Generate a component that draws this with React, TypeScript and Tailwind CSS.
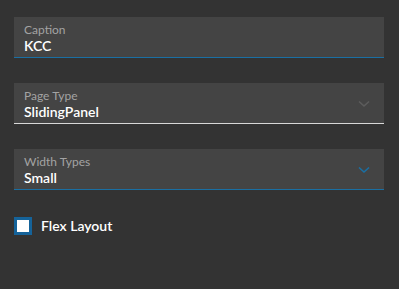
import React from "react";

function Chevron({ color }: { color: string }) {
  return (
    <svg width="12" height="8" viewBox="0 0 12 8" fill="none">
      <path d="M1 1.5 L6 6 L11 1.5" stroke={color} strokeWidth="1.6" />
    </svg>
  );
}

function Field({
  label,
  value,
  line,
  chevron,
}: {
  label: string;
  value: string;
  line: string;
  chevron?: string;
}) {
  return (
    <div className={`flex h-[41px] items-center bg-[#444444] border-b ${line}`}>
      <div className="flex flex-1 flex-col pl-[10px] pt-[1px]">
        <span className="text-[12px] leading-[15px] text-[#a3a3a3]">{label}</span>
        <span className="text-[14px] leading-[17px] font-semibold text-white">{value}</span>
      </div>
      {chevron && (
        <div className="pr-[14px] pt-[2px]">
          <Chevron color={chevron} />
        </div>
      )}
    </div>
  );
}

export default function App() {
  return (
    <div
      className="flex h-[289px] w-[415px] bg-white"
      style={{ fontFamily: "Lato, 'Open Sans', sans-serif" }}
    >
      <div className="flex h-full w-[399px] flex-col gap-[25px] bg-[#333333] pl-[14px] pr-[15px] pt-[17px]">
        <Field label="Caption" value="KCC" line="border-[#1a6fa3]" />
        <Field label="Page Type" value="SlidingPanel" line="border-[#d8d8d8]" chevron="#5c5c5c" />
        <Field label="Width Types" value="Small" line="border-[#1a6fa3]" chevron="#1a6fa3" />
        <label className="mt-[2px] flex items-center gap-[9px]">
          <span className="h-[18px] w-[18px] border-[3px] border-[#15639a] bg-white" />
          <span className="text-[14px] leading-[18px] font-semibold text-white">Flex Layout</span>
        </label>
      </div>
    </div>
  );
}
